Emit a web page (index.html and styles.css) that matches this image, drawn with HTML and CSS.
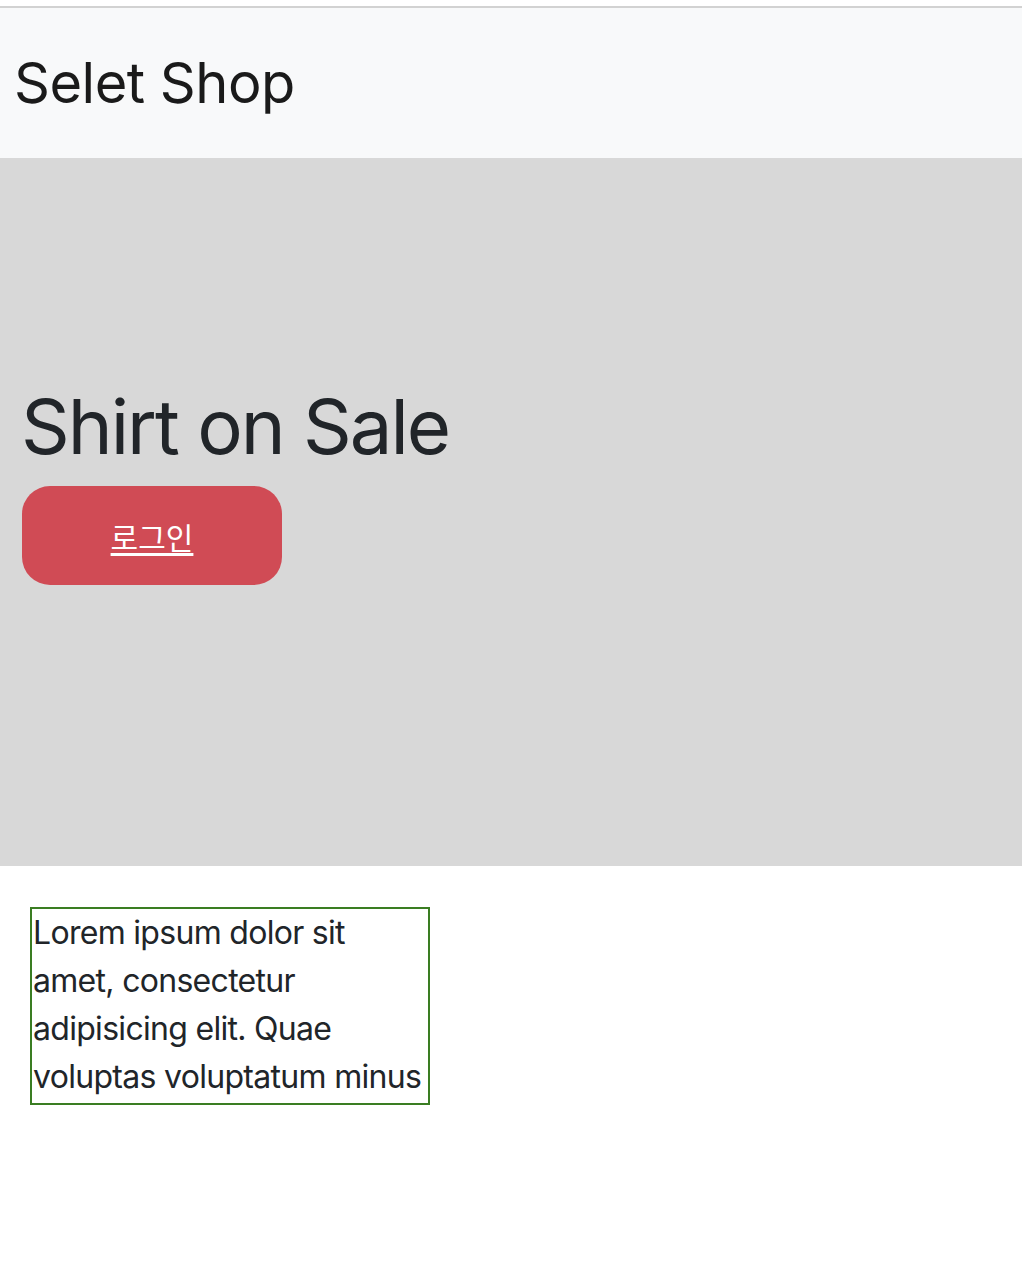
FILE: index.html
```html
<!DOCTYPE html>
<html lang="ko">
<head>
<meta charset="utf-8">
<title>Selet Shop</title>
<link rel="stylesheet" href="styles.css">
</head>
<body>
<div class="topline"></div>
<nav class="navbar">
  <span class="brand">Selet Shop</span>
</nav>
<section class="hero">
  <h1 class="hero-title">Shirt on Sale</h1>
  <a class="btn-login" href="#">로그인</a>
</section>
<main class="content">
  <div class="box">Lorem ipsum dolor sit amet, consectetur adipisicing elit. Quae voluptas voluptatum minus</div>
</main>
</body>
</html>
```

FILE: styles.css
```css
html, body {
  margin: 0;
  padding: 0;
  background: #ffffff;
  font-family: Inter, "Noto Sans CJK KR", "Liberation Sans", sans-serif;
  color: #212529;
}

.topline {
  height: 6px;
  border-bottom: 2px solid #d2d2d2;
}

.navbar {
  background: #f8f9fa;
  height: 150px;
  display: flex;
  align-items: center;
  padding-left: 14px;
}

.brand {
  font-size: 56px;
  color: #1a1a1a;
  letter-spacing: -0.5px;
}

.hero {
  background: #d8d8d8;
  height: 708px;
  box-sizing: border-box;
  padding: 223px 21px 0;
  display: flex;
  flex-direction: column;
  align-items: flex-start;
}

.hero-title {
  margin: 0;
  font-size: 76px;
  font-weight: 400;
  line-height: 1.2;
  letter-spacing: -2px;
  color: #212529;
}

.btn-login {
  margin-top: 14px;
  margin-left: 1px;
  width: 260px;
  height: 99px;
  border-radius: 28px;
  background: #d04b55;
  color: #ffffff;
  font-size: 30px;
  display: flex;
  align-items: center;
  justify-content: center;
  text-decoration: underline;
  text-underline-offset: 4px;
}

.content {
  padding: 41px 30px;
}

.box {
  width: 395px;
  border: 2px solid #3a7d22;
  font-size: 32px;
  line-height: 48px;
  padding: 0 0 2px 1px;
  box-sizing: content-box;
  letter-spacing: -0.7px;
}
```
